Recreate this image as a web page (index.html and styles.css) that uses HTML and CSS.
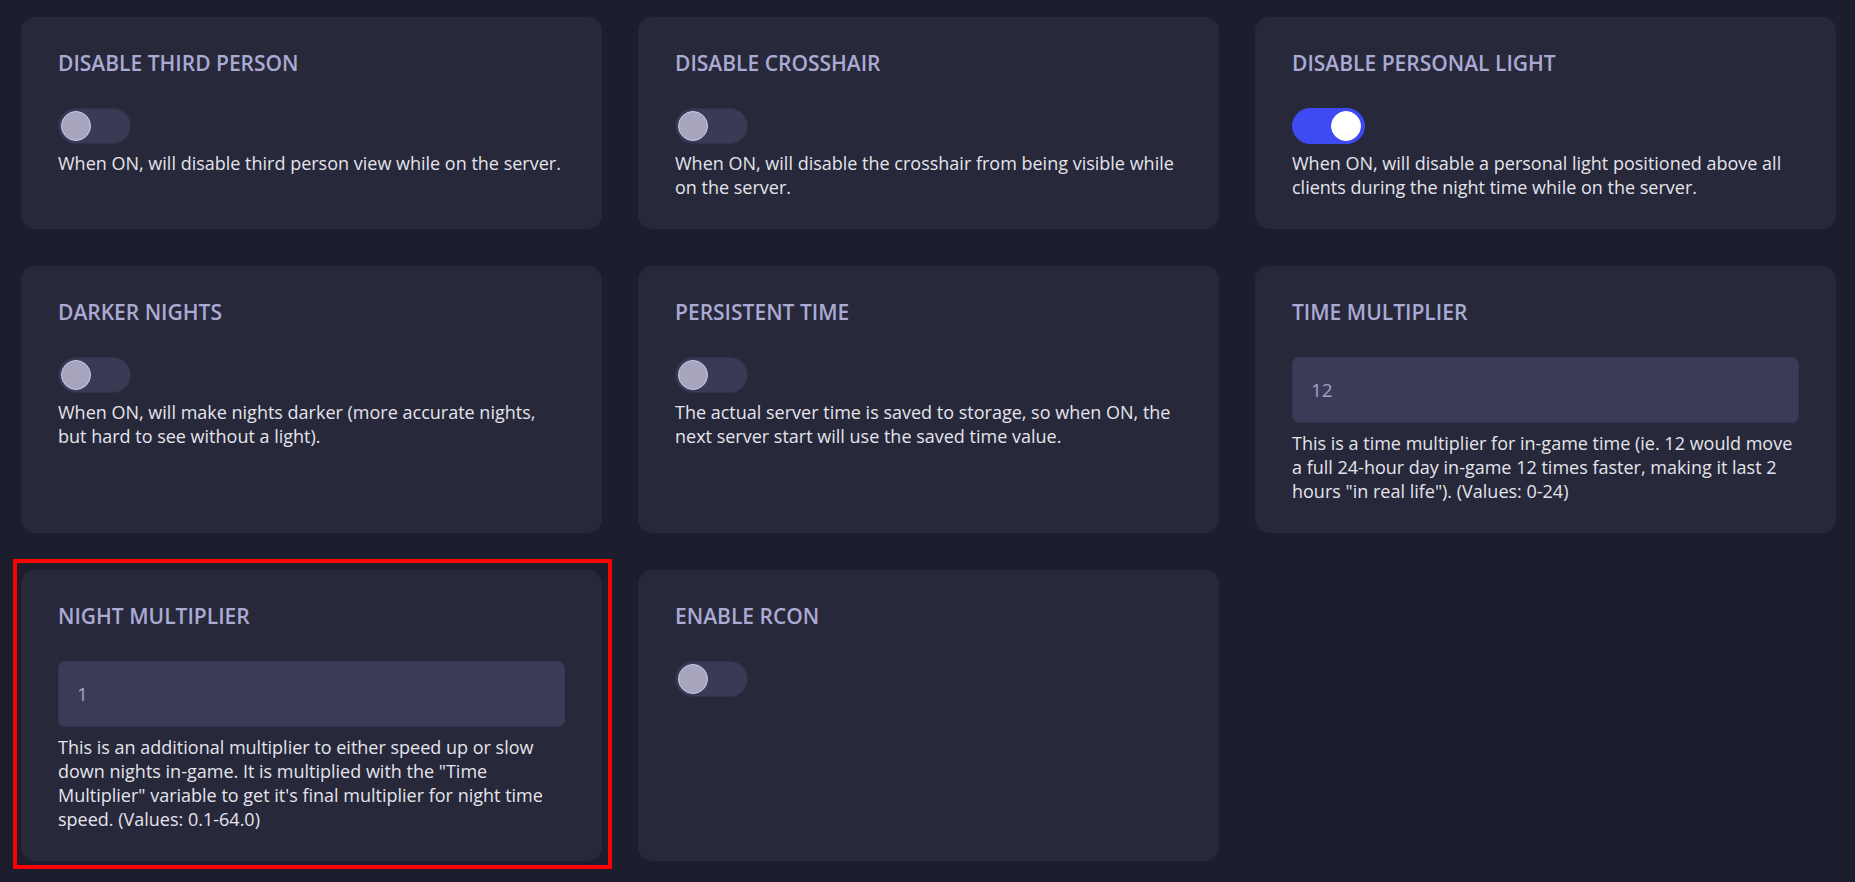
FILE: index.html
```html
<!DOCTYPE html>
<html lang="en">
<head>
    <meta charset="UTF-8">
    <meta name="viewport" content="width=device-width, initial-scale=1.0">
    <title>Server Settings</title>
    <link rel="stylesheet" href="styles.css">
</head>
<body>
    <div class="settings-grid">
        <div class="setting-card">
            <h3 class="setting-title">Disable Third Person</h3>
            <label class="switch">
                <input type="checkbox">
                <span class="slider"></span>
            </label>
            <p class="setting-desc">When ON, will disable third person view while on the server.</p>
        </div>
        <div class="setting-card">
            <h3 class="setting-title">Disable Crosshair</h3>
            <label class="switch">
                <input type="checkbox">
                <span class="slider"></span>
            </label>
            <p class="setting-desc">When ON, will disable the crosshair from being visible while on the server.</p>
        </div>
        <div class="setting-card">
            <h3 class="setting-title">Disable Personal Light</h3>
            <label class="switch">
                <input type="checkbox" checked>
                <span class="slider"></span>
            </label>
            <p class="setting-desc">When ON, will disable a personal light positioned above all clients during the night time while on the server.</p>
        </div>

        <div class="setting-card">
            <h3 class="setting-title">Darker Nights</h3>
            <label class="switch">
                <input type="checkbox">
                <span class="slider"></span>
            </label>
            <p class="setting-desc">When ON, will make nights darker (more accurate nights, but hard to see without a light).</p>
        </div>
        <div class="setting-card">
            <h3 class="setting-title">Persistent Time</h3>
            <label class="switch">
                <input type="checkbox">
                <span class="slider"></span>
            </label>
            <p class="setting-desc">The actual server time is saved to storage, so when ON, the next server start will use the saved time value.</p>
        </div>
        <div class="setting-card">
            <h3 class="setting-title">Time Multiplier</h3>
            <input class="setting-input" type="text" value="12">
            <p class="setting-desc">This is a time multiplier for in-game time (ie. 12 would move a full 24-hour day in-game 12 times faster, making it last 2 hours "in real life"). (Values: 0-24)</p>
        </div>

        <div class="setting-card highlighted">
            <h3 class="setting-title">Night Multiplier</h3>
            <input class="setting-input" type="text" value="1">
            <p class="setting-desc">This is an additional multiplier to either speed up or slow down nights in-game. It is multiplied with the "Time Multiplier" variable to get it's final multiplier for night time speed. (Values: 0.1-64.0)</p>
        </div>
        <div class="setting-card">
            <h3 class="setting-title">Enable RCON</h3>
            <label class="switch">
                <input type="checkbox">
                <span class="slider"></span>
            </label>
        </div>
    </div>
</body>
</html>
```

FILE: styles.css
```css
:root {
    --bg: #1c1e2e;
    --card: #272839;
    --title: #aaaad4;
    --text: #e4e4ec;
    --field: #3b3b57;
    --track: #3a3a55;
    --accent: #3e4af2;
}
body {
    background: var(--bg);
    color: var(--text);
    font-family: 'Open Sans', 'Noto Sans', sans-serif;
    margin: 0;
    padding: 17px 19px 20px 21px;
}
.settings-grid {
    display: grid;
    grid-template-columns: repeat(3, 1fr);
    column-gap: 36px;
    row-gap: 37px;
    align-items: stretch;
}
.setting-card {
    position: relative;
    background: var(--card);
    border-radius: 14px;
    padding: 33px 37px 30px;
    display: flex;
    flex-direction: column;
    align-items: flex-start;
}
/* red highlight frame drawn over the card */
.setting-card.highlighted::after {
    content: "";
    position: absolute;
    top: -11px;
    left: -8px;
    right: -10px;
    bottom: -8px;
    border: 4px solid #f00;
    pointer-events: none;
}
.setting-title {
    margin: 0 0 31px;
    font-size: 21px;
    line-height: 27px;
    font-weight: 600;
    text-transform: uppercase;
    color: var(--title);
}
.setting-desc {
    margin: 7px 0 0;
    font-size: 18px;
    line-height: 24px;
}
.setting-input {
    box-sizing: border-box;
    width: 100%;
    height: 66px;
    margin-bottom: 1px;
    padding: 0 18px;
    background: var(--field);
    border: 1px solid #36364f;
    border-radius: 7px;
    color: #a3a3c8;
    font-family: 'Open Sans', 'Noto Sans', sans-serif;
    font-size: 19px;
    outline: none;
}
/* toggle switch */
.switch {
    position: relative;
    display: inline-block;
    width: 73px;
    height: 36px;
}
.switch input {
    opacity: 0;
    width: 0;
    height: 0;
}
.slider {
    position: absolute;
    inset: 0;
    background: var(--track);
    border: 1px solid #31314a;
    border-radius: 18px;
    cursor: pointer;
    transition: all 0.2s ease;
}
.slider::before {
    content: "";
    position: absolute;
    left: 2px;
    top: 2px;
    width: 28px;
    height: 28px;
    border-radius: 50%;
    background: #a6a5bd;
    border: 1px solid #cacaf0;
    transition: all 0.2s ease;
}
.switch input:checked + .slider {
    background: var(--accent);
    border-color: var(--accent);
}
.switch input:checked + .slider::before {
    left: 38px;
    background: #fff;
    border-color: #fff;
}
```
